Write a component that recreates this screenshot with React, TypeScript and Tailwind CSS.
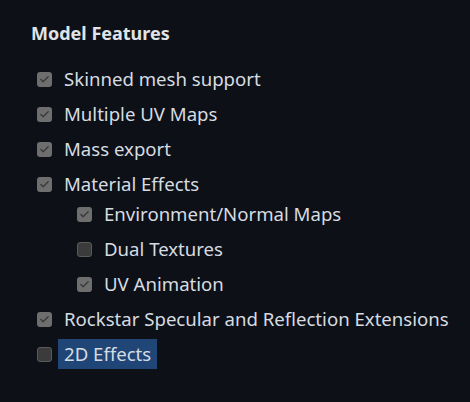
import { Check } from "lucide-react"

type Item = { label: string; checked: boolean; highlight?: boolean; children?: Item[] }

const items: Item[] = [
  { label: "Skinned mesh support", checked: true },
  { label: "Multiple UV Maps", checked: true },
  { label: "Mass export", checked: true },
  {
    label: "Material Effects",
    checked: true,
    children: [
      { label: "Environment/Normal Maps", checked: true },
      { label: "Dual Textures", checked: false },
      { label: "UV Animation", checked: true },
    ],
  },
  { label: "Rockstar Specular and Reflection Extensions", checked: true },
  { label: "2D Effects", checked: false, highlight: true },
]

function Box({ checked }: { checked: boolean }) {
  return checked ? (
    <span className="w-[15px] h-[15px] rounded-[3px] bg-[#6e6e6e] flex items-center justify-center shrink-0">
      <Check size={11} strokeWidth={3} className="text-[#3a3a3a]" />
    </span>
  ) : (
    <span className="w-[15px] h-[15px] rounded-[3px] bg-[#3b3b3b] border border-[#5a5a5a] shrink-0" />
  )
}

function Row({ item }: { item: Item }) {
  return (
    <li className="flex flex-col">
      <div className="flex items-center h-[30px]">
        <Box checked={item.checked} />
        <span className={"ml-[6px] px-[6px] h-[30px] flex items-center " + (item.highlight ? "bg-[#1f4677]" : "")}>
          {item.label}
        </span>
      </div>
      {item.children && (
        <ul className="flex flex-col gap-[5px] pl-[40px]">
          {item.children.map((c) => (
            <Row key={c.label} item={c} />
          ))}
        </ul>
      )}
    </li>
  )
}

export default function App() {
  return (
    <div
      className="w-[470px] h-[402px] bg-[#0d1117] text-[#d6dce2] pt-[20px] pl-[31px]"
      style={{ fontFamily: '"Noto Sans", "Open Sans", sans-serif' }}
    >
      <h2 className="text-[18px] font-bold leading-[26px] text-[#e0e4e8]">Model Features</h2>
      <ul className="mt-[18px] pl-[6px] flex flex-col gap-[5px] text-[18.6px]">
        {items.map((it) => (
          <Row key={it.label} item={it} />
        ))}
      </ul>
    </div>
  )
}
